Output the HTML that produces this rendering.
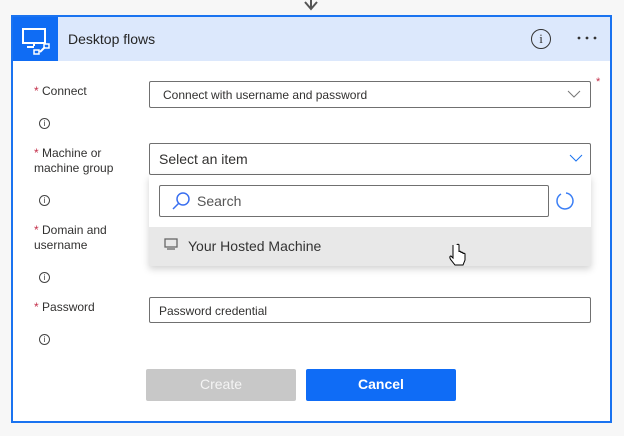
<!DOCTYPE html>
<html><head><style>
body{margin:0;width:624px;height:436px;background:#f7f7f7;font-family:"Liberation Sans",sans-serif;position:relative;overflow:hidden;color:#323130}
.a{position:absolute}
.card{left:11px;top:15px;width:597px;height:404px;border:2px solid #1a73f0;background:#fff;box-sizing:content-box}
.hdr{left:0;top:0;width:597px;height:44px;background:#dce8fc}
.ico{left:0;top:0;width:45px;height:44px;background:#0f6cf4}
.lbl{font-size:12px;color:#323130;line-height:15px}
.lbl b{color:#c4314b;font-weight:normal}
.info{width:9px;height:9px;border:1px solid #444;border-radius:50%;font-size:8px;line-height:9px;text-align:center;color:#333}
.box{border:1px solid #707070;border-radius:2px;background:#fff;box-sizing:border-box;font-size:12px;padding-left:13px}
.btn{font-size:14px;text-align:center;line-height:31px;border-radius:2px}
</style></head><body>
<svg class="a" style="left:302px;top:0" width="18" height="14"><path d="M3 2 L9 9 L15 2 M9 0 V9" stroke="#555" stroke-width="2" fill="none"/></svg>
<div class="a card">
 <div class="a hdr"></div>
 <div class="a ico"><svg width="45" height="44"><rect x="10" y="12" width="22" height="14" fill="none" stroke="#fff" stroke-width="2"/><path d="M21 26v3M14 30h7M32 30l-5 5" stroke="#fff" stroke-width="2" fill="none"/><rect x="21" y="33" width="5" height="4" fill="none" stroke="#fff" stroke-width="1.5"/><rect x="31" y="27" width="5" height="4" fill="none" stroke="#fff" stroke-width="1.5"/></svg></div>
 <div class="a" style="left:55px;top:14px;font-size:14px;color:#252525">Desktop flows</div>
 <div class="a" style="left:518px;top:12px;width:18px;height:18px;border:1.5px solid #333;border-radius:50%;font-size:13px;text-align:center;line-height:18px;font-family:'Liberation Serif',serif">i</div>
 <svg class="a" style="left:562px;top:18px" width="24" height="6"><circle cx="4" cy="3" r="1.4" fill="#333"/><circle cx="12" cy="3" r="1.4" fill="#333"/><circle cx="20" cy="3" r="1.4" fill="#333"/></svg>
</div>
<div class="a lbl" style="left:34px;top:84px"><b>* </b>Connect</div>
<div class="a info" style="left:39px;top:118px">i</div>
<div class="a lbl" style="left:34px;top:146px"><b>* </b>Machine or<br>machine group</div>
<div class="a info" style="left:39px;top:195px">i</div>
<div class="a lbl" style="left:34px;top:223px"><b>* </b>Domain and<br>username</div>
<div class="a info" style="left:39px;top:272px">i</div>
<div class="a lbl" style="left:34px;top:300px"><b>* </b>Password</div>
<div class="a info" style="left:39px;top:334px">i</div>
<div class="a box" style="left:149px;top:81px;width:442px;height:27px;line-height:26px">Connect with username and password</div>
<svg class="a" style="left:567px;top:89px" width="14" height="10"><path d="M1 2l6 6 6-6" stroke="#777" fill="none"/></svg>
<div class="a" style="left:596px;top:76px;color:#c4314b;font-size:11px">*</div>
<div class="a box" style="left:149px;top:143px;width:442px;height:32px;line-height:31px;font-size:14px;padding-left:9px">Select an item</div>
<svg class="a" style="left:569px;top:153px" width="14" height="10"><path d="M1 2l6 6 6-6" stroke="#1a73f0" fill="none"/></svg>
<div class="a" style="left:149px;top:175px;width:442px;height:91px;background:#fff;box-shadow:0 3px 7px rgba(0,0,0,.18)"></div>
<div class="a box" style="left:159px;top:185px;width:390px;height:32px;line-height:31px;font-size:14px;padding-left:37px;color:#555">Search</div>
<svg class="a" style="left:171px;top:191px" width="20" height="20"><circle cx="12" cy="8" r="6" stroke="#3a6ff0" stroke-width="1.5" fill="none"/><path d="M8 12l-6 6" stroke="#3a6ff0" stroke-width="1.5"/></svg>
<svg class="a" style="left:555px;top:191px" width="20" height="20"><path d="M6 3A8 8 0 1 0 11 2" stroke="#3a7ef5" stroke-width="1.5" fill="none"/></svg>
<div class="a" style="left:149px;top:227px;width:442px;height:39px;background:#e8e8e8"></div>
<svg class="a" style="left:164px;top:238px" width="16" height="14"><rect x="1" y="1" width="12" height="8" fill="none" stroke="#666" stroke-width="1.3"/><path d="M3 11h8" stroke="#666" stroke-width="1.3"/></svg>
<div class="a" style="left:188px;top:238px;font-size:14px;color:#333">Your Hosted Machine</div>
<svg class="a" style="left:449px;top:243px" width="20" height="26"><path d="M4 2v13l-2-2c-2 0 -1 3 0 4l4 5h8l2-5v-6c0-1-2-1-2 0v-1c0-1-2-1-2 0v-1c0-1-2-1-2 0V2c0-1-2-1-2 0" fill="#fff" stroke="#000" stroke-width="1"/></svg>
<div class="a box" style="left:149px;top:297px;width:442px;height:26px;line-height:26px;font-size:12px;padding-left:9px">Password credential</div>
<div class="a btn" style="left:146px;top:369px;width:150px;height:32px;background:#c8c8c8;color:#f4f4f4">Create</div>
<div class="a btn" style="left:306px;top:369px;width:150px;height:32px;background:#0f6cf6;color:#fff;font-weight:bold">Cancel</div>
</body></html>
